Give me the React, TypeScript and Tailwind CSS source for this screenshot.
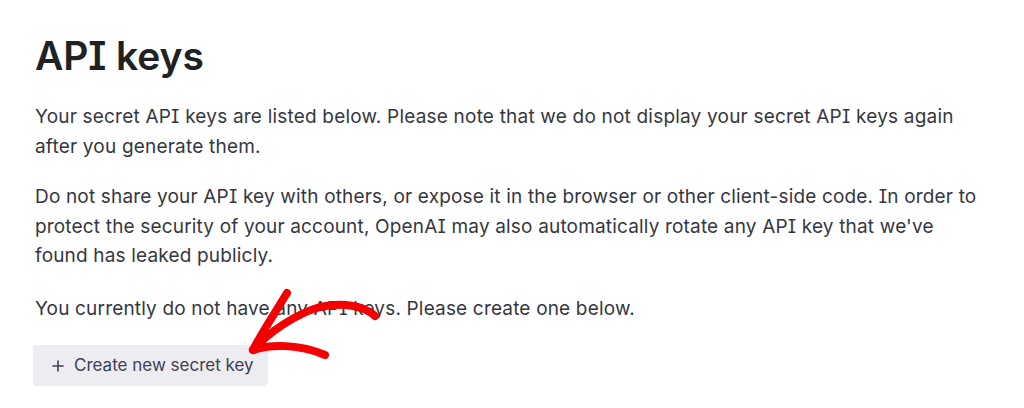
import React from "react";

export default function App() {
  return (
    <div className="relative w-[1024px] h-[408px] overflow-hidden bg-white font-['Inter','Liberation_Sans',sans-serif] [font-feature-settings:'cv08']">
      <div className="pl-[35px] pr-[34px] pt-[32px]">
        <h1 className="text-[39px] leading-[48px] font-semibold text-[#202123] tracking-[-0.1px]">API keys</h1>
        <p className="mt-[22px] text-[19px] leading-[29.5px] tracking-[0.2px] text-[#353740]">
          Your secret API keys are listed below. Please note that we do not display your secret API keys again after you generate them.
        </p>
        <p className="mt-[21px] text-[19px] leading-[29.5px] tracking-[0.17px] text-[#353740]">
          Do not share your API key with others, or expose it in the browser or other client-side code. In order to protect the security of your account, OpenAI may also automatically rotate any API key that we've found has leaked publicly.
        </p>
        <p className="mt-[23px] text-[19px] leading-[29.5px] tracking-[0.17px] text-[#353740]">
          You currently do not have any API keys. Please create one below.
        </p>
        <button className="-ml-[2px] mt-[22px] flex h-[41px] w-[235px] items-center gap-[10px] rounded-[4px] bg-[#ececf1] pl-[19px] text-[17px] text-[#40414f]">
          <svg width="12" height="12" viewBox="0 0 12 12" fill="none" stroke="#40414f" strokeWidth="1.6" strokeLinecap="round">
            <path d="M6 1v10M1 6h10" />
          </svg>
          <span>Create new secret key</span>
        </button>
      </div>
      <svg className="pointer-events-none absolute left-0 top-0" width="1024" height="408" viewBox="0 0 1024 408" fill="none" stroke="#f40000" strokeWidth="8" strokeLinecap="round" strokeLinejoin="round">
        <path d="M375 316 C362 304 340 303 320 307 C295 314 268 333 253 350" />
        <path d="M287 293 C278 308 262 332 253 350" />
        <path d="M253 350 C270 344 300 344 325 355" />
      </svg>
    </div>
  );
}
